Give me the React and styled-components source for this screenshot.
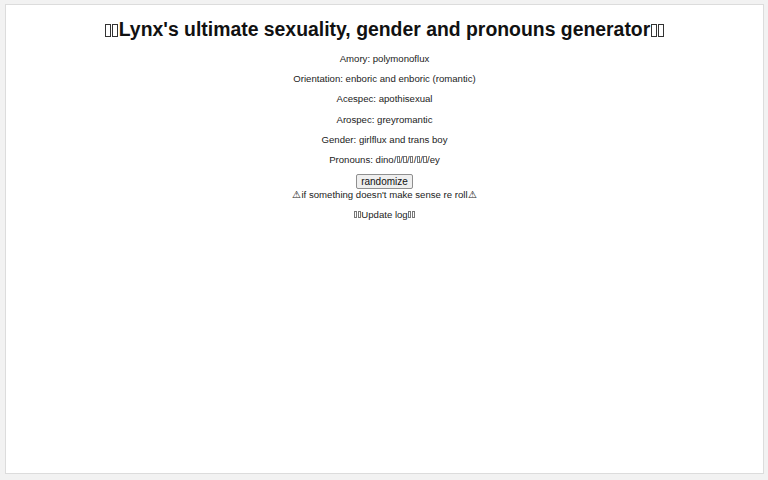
import React from "react";
import styled, { createGlobalStyle } from "styled-components";

const Global = createGlobalStyle`
  html, body { margin: 0; padding: 0; background: #f2f2f2; }
  body { padding: 4px 4px 4px 5px; font-family: "Liberation Sans", Arial, sans-serif; color: #111; }
`;

const Card = styled.div`
  background: #fff;
  border: 1px solid #dcdcdc;
  height: 470px;
  box-sizing: border-box;
  text-align: center;
  padding-top: 9px;
`;

const Title = styled.h1`
  font-size: 19.4px;
  font-weight: bold;
  margin: 0 0 9px;
  line-height: 30px;
  color: #111;
`;

const Line = styled.p`
  font-size: 9.6px;
  line-height: 12px;
  margin: 0 0 8.2px;
  color: #222;
`;

const Block = styled.div`
  font-size: 9.6px;
  line-height: 12px;
  color: #222;
  margin: 0 0 8px;
`;

const Button = styled.button`
  font-family: "Liberation Sans", Arial, sans-serif;
  font-size: 10px;
  line-height: 11px;
  padding: 1px 4px;
  background: #efefef;
  border: 1px solid #8f8f8f;
  border-radius: 2px;
  color: #111;
  margin-top: 0;
`;

const Tofu = styled.span`
  display: inline-block;
  width: ${(p) => (p.$big ? "6px" : "3.5px")};
  height: ${(p) => (p.$big ? "13px" : "7px")};
  border: 1px solid ${(p) => (p.$big ? "#333" : "#777")};
  margin: 0 ${(p) => (p.$big ? "0.5px" : "0.25px")};
  vertical-align: ${(p) => (p.$big ? "-1px" : "0")};
  box-sizing: border-box;
`;

const T2 = ({ big }) => (
  <>
    <Tofu $big={big} />
    <Tofu $big={big} />
  </>
);

const items = [
  ["Amory", "polymonoflux"],
  ["Orientation", "enboric and enboric (romantic)"],
  ["Acespec", "apothisexual"],
  ["Arospec", "greyromantic"],
  ["Gender", "girlflux and trans boy"],
];

export default function App() {
  return (
    <>
      <Global />
      <Card>
        <Title>
          <T2 big />Lynx's ultimate sexuality, gender and pronouns generator<T2 big />
        </Title>
        {items.map(([k, v]) => (
          <Line key={k}>
            {k}: {v}
          </Line>
        ))}
        <Line>
          Pronouns: dino/<Tofu />/<Tofu />/<Tofu />/<Tofu />/<Tofu />/ey
        </Line>
        <Block>
          <Button>randomize</Button>
          <br />
          ⚠if something doesn't make sense re roll⚠
        </Block>
        <Line>
          <T2 />Update log<T2 />
        </Line>
      </Card>
    </>
  );
}
